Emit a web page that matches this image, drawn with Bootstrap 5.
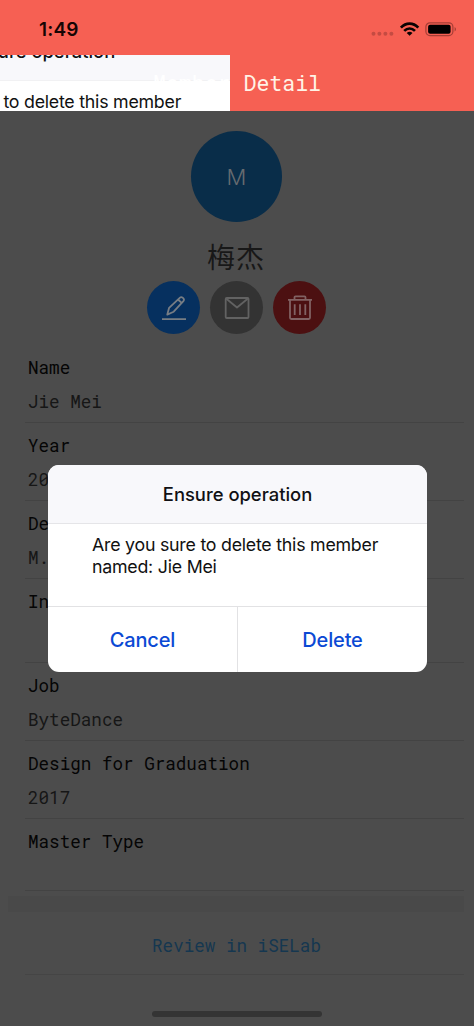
<!DOCTYPE html>
<html lang="en">
<head>
<meta charset="utf-8">
<meta name="viewport" content="width=device-width, initial-scale=1">
<title>Member Detail</title>
<link href="https://cdn.jsdelivr.net/npm/bootstrap@5.3.0/dist/css/bootstrap.min.css" rel="stylesheet">
<style>
  body { background:#4c4c4c; font-family:Inter,"Liberation Sans",sans-serif; color:#060606; }
  .screen { width:474px; height:1026px; }
  .mono { font-family:"Roboto Mono","DejaVu Sans Mono",monospace; font-size:17.6px; }
  .top-area { height:111px; background:#f66053; }
  .status { height:55px; padding:5px 17px 0 39px; }
  .status svg { margin-top:2px; }
  .clock { font-size:19px; font-weight:600; color:#160504; letter-spacing:.2px; }
  .title-row { height:56px; font-size:21.55px; color:#fff; z-index:2; }
  .title-row span { color:#fff3e6; }
  .ghost-clip { top:55px; left:0; width:230px; height:56px; }
  .ghost-clip .dialog-box { top:-33px; left:-149px; border-radius:0; }
  .dialog-box { width:379px; height:207px; background:#fff; border-radius:11px; }
  .dialog-main { top:465px; left:48px; }
  .dialog-head { height:59px; padding-top:1px; background:#f8f8fb; border-bottom:1px solid #e5e5e8; font-size:18.4px; font-weight:500; color:#101014; }
  .ghost-clip .dialog-head { border-bottom-color:#f1f1f3; }
  .dialog-text { height:82px; padding:10px 20px 0 44px; font-size:17.8px; letter-spacing:-.24px; line-height:21.5px; color:#111; white-space:nowrap; }
  .dialog-foot { height:66px; border-top:1px solid #e2e2e4; }
  .dialog-foot button { font-size:20px; font-weight:500; color:#0b49d4; letter-spacing:-.15px; }
  .dialog-foot button:first-child { width:189px; }
  .dialog-foot button + button { width:190px; border-left:1px solid #e2e2e4 !important; }
  .profile { height:233px; padding:20px 1px 0 0; }
  .avatar { width:91px; height:91px; padding-top:2px; background:#092d49; color:#666b70; font-size:22px; font-weight:300; }
  .person { font-family:"Noto Sans CJK SC",sans-serif; font-size:28px; font-weight:400; line-height:30px; letter-spacing:1px; color:#181818; margin:19px 0 0 -1px; height:40px; }
  .round { width:53px; height:53px; }
  .field { height:78px; margin-left:25px; margin-right:10px; padding:11px 0 0 3px; border-bottom:1px solid #434343; }
  .field dt { font-weight:400; line-height:24px; height:34px; color:#050505; }
  .field dd { margin:0; line-height:24px; color:#161616; }
  .band { height:16px; margin:5px 10px 0 8px; background:#494949; }
  .review { height:63px; margin-left:25px; margin-right:10px; padding:7px 16px 0 0; border-bottom:1px solid #454545; color:#153750; }
  .home-bar { width:170px; height:6px; margin:36px 0 0 152px; background:#343434; }
</style>
</head>
<body>
<div class="screen position-relative overflow-hidden">
  <header class="top-area position-relative">
    <div class="status d-flex align-items-center justify-content-between">
      <span class="clock">1:49</span>
      <svg width="86" height="18" viewBox="0 -1 86 18">
        <g fill="#c54b42"><circle cx="2.5" cy="10.8" r="2"/><circle cx="8.4" cy="10.8" r="2"/><circle cx="14.4" cy="10.8" r="2"/><circle cx="20.4" cy="10.8" r="2"/></g>
        <g fill="none" stroke="#0b0303" stroke-width="2.7"><path d="M29.900 4.600C35-.7 42.200-.7 47.300 4.600"/><path d="M33.200 7.900c3.200-3.100 7.600-3.100 10.800 0"/></g>
        <path d="M35.700 9.900c1.800-1.500 4-1.500 5.800 0l-2.900 2.900z" fill="#0b0303"/>
        <rect x="54.900" y="-.2" width="27" height="12.800" rx="4" fill="none" stroke="#a53e36" stroke-width="1.200"/>
        <rect x="57.100" y="1.700" width="22.500" height="9" rx="2" fill="#000"/>
        <path d="M83.600 4v4.400c1.900-.8 1.900-3.600 0-4.400" fill="#a53e36"/>
      </svg>
    </div>
    <div class="title-row mono position-relative d-flex align-items-center justify-content-center">Member&nbsp;<span>Detail</span></div>
    <div class="ghost-clip position-absolute overflow-hidden" aria-hidden="true">
      <div class="dialog-box position-absolute">
        <div class="dialog-head d-flex align-items-center justify-content-center">Ensure operation</div>
        <div class="dialog-text">Are you sure to delete this member<br>named: Jie Mei</div>
      </div>
    </div>
  </header>

  <section class="profile d-flex flex-column align-items-center">
    <div class="avatar rounded-circle d-flex align-items-center justify-content-center">M</div>
    <div class="person" lang="zh">梅杰</div>
    <div class="d-flex" style="gap:10px">
      <div class="round rounded-circle d-flex align-items-center justify-content-center" style="background:#06305f">
        <svg width="28" height="28" viewBox="0 0 28 28" fill="none" stroke="#777d84" stroke-width="1.800" stroke-linejoin="round"><path d="M2 25.200h24M7.300 20.600l1.800-6.800L20 3.600c1.600-1.500 5 1.100 3.600 3.200L13.700 17.700zM18 5.500l3.900 3.600"/></svg>
      </div>
      <div class="round rounded-circle d-flex align-items-center justify-content-center" style="background:#333">
        <svg width="28" height="28" viewBox="0 0 28 28" fill="none" stroke="#626262" stroke-width="1.800" stroke-linejoin="round"><rect x="2.700" y="4" width="22.800" height="20" rx="1"/><path d="M3 4.500l11 9 11-9"/></svg>
      </div>
      <div class="round rounded-circle d-flex align-items-center justify-content-center" style="background:#4c1011">
        <svg width="28" height="28" viewBox="0 0 28 28" fill="none" stroke="#816263" stroke-width="1.800" stroke-linejoin="round"><path d="M2 5.800h24M4 5.800v18q0 1.200 1.200 1.200h17.600q1.200 0 1.200-1.200v-18M8.500 5.500V3.300q0-1 1-1h9q1 0 1 1v2.200M8.700 10.300v10.700M14 10.300v10.700M19.300 10.300v10.700"/></svg>
      </div>
    </div>
  </section>

  <dl class="mono m-0">
    <div class="field" style="height:79px;padding-top:12px"><dt>Name</dt><dd>Jie Mei</dd></div>
    <div class="field"><dt>Year</dt><dd>2017</dd></div>
    <div class="field"><dt>Degree</dt><dd>M.S.</dd></div>
    <div class="field" style="height:84px"><dt>Info</dt></div>
    <div class="field"><dt>Job</dt><dd>ByteDance</dd></div>
    <div class="field"><dt>Design for Graduation</dt><dd>2017</dd></div>
    <div class="field" style="height:72px"><dt>Master Type</dt></div>
  </dl>
  <div class="band"></div>
  <div class="review mono d-flex align-items-center justify-content-center">Review in iSELab</div>
  <div class="home-bar rounded-pill"></div>

  <div class="dialog-box dialog-main position-absolute overflow-hidden" role="dialog">
    <div class="dialog-head d-flex align-items-center justify-content-center">Ensure operation</div>
    <div class="dialog-text">Are you sure to delete this member<br>named: Jie Mei</div>
    <div class="dialog-foot d-flex">
      <button class="border-0 bg-transparent p-0">Cancel</button>
      <button class="border-0 bg-transparent p-0">Delete</button>
    </div>
  </div>
</div>
<script src="https://cdn.jsdelivr.net/npm/bootstrap@5.3.0/dist/js/bootstrap.bundle.min.js"></script>
</body>
</html>
